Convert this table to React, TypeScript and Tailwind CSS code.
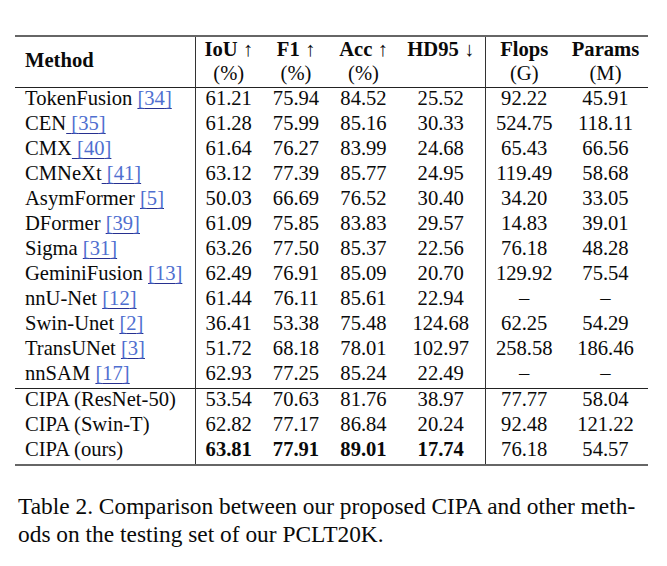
import React from "react";

type Row = {
  name: string;
  cite?: string;
  citeSpace?: boolean;
  vals: string[];
  bold?: boolean[];
};

const rows: Row[] = [
  { name: "TokenFusion", cite: "34", vals: ["61.21", "75.94", "84.52", "25.52", "92.22", "45.91"] },
  { name: "CEN", cite: "35", citeSpace: true, vals: ["61.28", "75.99", "85.16", "30.33", "524.75", "118.11"] },
  { name: "CMX", cite: "40", citeSpace: true, vals: ["61.64", "76.27", "83.99", "24.68", "65.43", "66.56"] },
  { name: "CMNeXt", cite: "41", citeSpace: true, vals: ["63.12", "77.39", "85.77", "24.95", "119.49", "58.68"] },
  { name: "AsymFormer", cite: "5", vals: ["50.03", "66.69", "76.52", "30.40", "34.20", "33.05"] },
  { name: "DFormer", cite: "39", vals: ["61.09", "75.85", "83.83", "29.57", "14.83", "39.01"] },
  { name: "Sigma", cite: "31", vals: ["63.26", "77.50", "85.37", "22.56", "76.18", "48.28"] },
  { name: "GeminiFusion", cite: "13", vals: ["62.49", "76.91", "85.09", "20.70", "129.92", "75.54"] },
  { name: "nnU-Net", cite: "12", vals: ["61.44", "76.11", "85.61", "22.94", "–", "–"] },
  { name: "Swin-Unet", cite: "2", vals: ["36.41", "53.38", "75.48", "124.68", "62.25", "54.29"] },
  { name: "TransUNet", cite: "3", vals: ["51.72", "68.18", "78.01", "102.97", "258.58", "186.46"] },
  { name: "nnSAM", cite: "17", vals: ["62.93", "77.25", "85.24", "22.49", "–", "–"] },
];

const ours: Row[] = [
  { name: "CIPA (ResNet-50)", vals: ["53.54", "70.63", "81.76", "38.97", "77.77", "58.04"] },
  { name: "CIPA (Swin-T)", vals: ["62.82", "77.17", "86.84", "20.24", "92.48", "121.22"] },
  {
    name: "CIPA (ours)",
    vals: ["63.81", "77.91", "89.01", "17.74", "76.18", "54.57"],
    bold: [true, true, true, true, false, false],
  },
];

function Cite({ n, space }: { n: string; space?: boolean }) {
  return (
    <>
      {!space && " "}
      <span className="text-[#4f6fd0] underline decoration-[#27308f] decoration-1 underline-offset-[3px]">
        {space ? " " : ""}[{n}]
      </span>
    </>
  );
}

function DataRow({ row, first }: { row: Row; first?: boolean }) {
  return (
    <tr className={first ? "border-t border-[#222]" : ""}>
      <td className="h-[25px] pl-[10px] pb-[5px] align-top leading-[20px] text-left border-r border-[#333] whitespace-nowrap">
        {row.name}
        {row.cite && <Cite n={row.cite} space={row.citeSpace} />}
      </td>
      {row.vals.map((v, i) => (
        <td
          key={i}
          className={`h-[25px] pb-[5px] align-top leading-[20px] text-center whitespace-nowrap ${
            i === 3 ? "border-r border-[#333]" : ""
          } ${row.bold?.[i] ? "font-bold" : ""}`}
        >
          {v}
        </td>
      ))}
    </tr>
  );
}

export default function App() {
  const head = [
    { top: "IoU", arrow: "↑", sub: "(%)" },
    { top: "F1", arrow: "↑", sub: "(%)" },
    { top: "Acc", arrow: "↑", sub: "(%)" },
    { top: "HD95", arrow: "↓", sub: "" },
    { top: "Flops", arrow: "", sub: "(G)" },
    { top: "Params", arrow: "", sub: "(M)" },
  ];

  return (
    <div className="w-[667px] h-[566px] bg-white text-[#0a0a0a] pt-[35px] pl-[15px] font-['Liberation_Serif','Times_New_Roman',serif]">
      <table className="table-fixed border-collapse w-[633px] text-[20.6px] font-['Liberation_Serif','Times_New_Roman',serif] border-t-2 border-b-2 border-[#666]">
        <colgroup>
          <col className="w-[180px]" />
          <col className="w-[67px]" />
          <col className="w-[68px]" />
          <col className="w-[67px]" />
          <col className="w-[88px]" />
          <col className="w-[78px]" />
          <col className="w-[85px]" />
        </colgroup>
        <thead>
          <tr className="border-b border-[#222]">
            <th className="h-[51px] pl-[10px] pb-[2px] text-left align-middle font-bold border-r border-[#333]">
              Method
            </th>
            {head.map((h, i) => (
              <th
                key={i}
                className={`h-[51px] pt-0 align-top text-center leading-[24px] ${
                  i === 3 ? "border-r border-[#333]" : ""
                }`}
              >
                <div className="font-bold whitespace-nowrap">
                  {h.top}
                  {h.arrow && <span className="font-normal"> {h.arrow}</span>}
                </div>
                <div className="font-normal">{h.sub || "\u00a0"}</div>
              </th>
            ))}
          </tr>
        </thead>
        <tbody>
          {rows.map((r) => (
            <DataRow key={r.name} row={r} />
          ))}
          {ours.map((r, i) => (
            <DataRow key={r.name} row={r} first={i === 0} />
          ))}
        </tbody>
      </table>

      <div className="mt-[26px] ml-[3px] text-[23.4px] leading-[28px] text-[#0a0a0a]">
        <p className="whitespace-nowrap">Table 2. Comparison between our proposed CIPA and other meth-</p>
        <p className="whitespace-nowrap">ods on the testing set of our PCLT20K.</p>
      </div>
    </div>
  );
}
